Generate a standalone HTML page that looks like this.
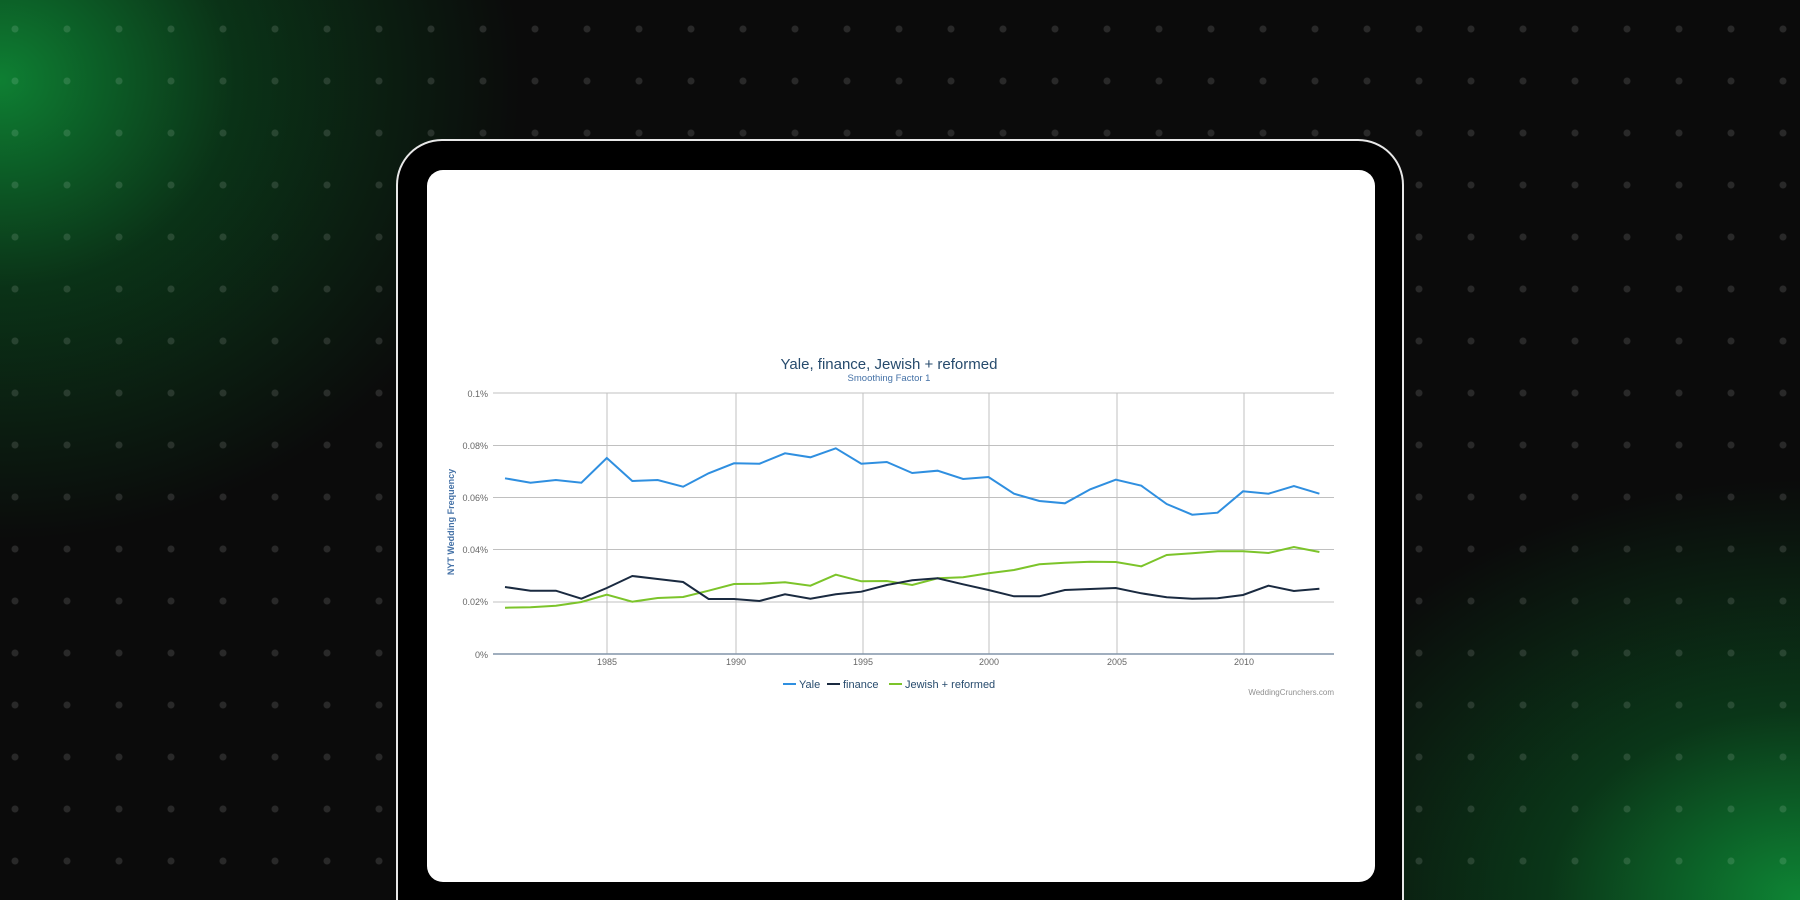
<!DOCTYPE html>
<html><head><meta charset="utf-8"><style>
html,body{margin:0;padding:0;overflow:hidden;width:1800px;height:900px}
body{background:#0b0b0b;font-family:"Liberation Sans",sans-serif}
#w{position:relative;width:1800px;height:900px;overflow:hidden;background:#0b0b0b}
.bg{position:absolute;inset:0;background:
radial-gradient(ellipse 520px 460px at 0px 80px,rgba(14,140,55,0.9),rgba(10,90,35,0.5) 45%,rgba(11,11,11,0) 100%),
radial-gradient(ellipse 560px 420px at 1800px 900px,rgba(14,140,55,0.95),rgba(10,90,35,0.55) 45%,rgba(11,11,11,0) 100%);}
.dots{position:absolute;inset:0;background-image:radial-gradient(circle,rgba(255,255,255,0.12) 3.2px,transparent 3.8px);background-size:52px 52px;background-position:-11px 3px}
.tab{position:absolute;left:396px;top:139px;width:1008px;height:761px;border-radius:46px 46px 0 0;background:#000;border:2px solid #e8e8e8;border-bottom:none;box-sizing:border-box}
.scr{position:absolute;left:427px;top:170px;width:948px;height:712px;background:#fff;border-radius:16px}
svg{position:absolute;left:0;top:0}
</style></head><body><div id="w">
<div class="bg"></div><div class="dots"></div>
<div class="tab"></div><div class="scr"></div>
<svg width="1800" height="900" id="c" font-family="Liberation Sans, sans-serif">
<g stroke="#c0c0c0" stroke-width="1">
<line x1="607" y1="393" x2="607" y2="654"/><line x1="736" y1="393" x2="736" y2="654"/><line x1="863" y1="393" x2="863" y2="654"/><line x1="989" y1="393" x2="989" y2="654"/><line x1="1117" y1="393" x2="1117" y2="654"/><line x1="1244" y1="393" x2="1244" y2="654"/>
<line x1="493" y1="393" x2="1334" y2="393"/><line x1="493" y1="445.5" x2="1334" y2="445.5"/><line x1="493" y1="497.5" x2="1334" y2="497.5"/><line x1="493" y1="549.5" x2="1334" y2="549.5"/><line x1="493" y1="602" x2="1334" y2="602"/>
</g>
<line x1="493" y1="654" x2="1334" y2="654" stroke="#8094a8" stroke-width="1.5"/>
<g font-size="9" fill="#666" text-anchor="end">
<text x="488" y="397">0.1%</text><text x="488" y="449">0.08%</text><text x="488" y="501">0.06%</text><text x="488" y="553">0.04%</text><text x="488" y="605">0.02%</text><text x="488" y="658">0%</text>
</g>
<g font-size="9" fill="#666" text-anchor="middle">
<text x="607" y="665">1985</text><text x="736" y="665">1990</text><text x="863" y="665">1995</text><text x="989" y="665">2000</text><text x="1117" y="665">2005</text><text x="1244" y="665">2010</text>
</g>
<text x="454" y="522" transform="rotate(-90 454 522)" text-anchor="middle" font-size="9" font-weight="bold" fill="#4572a7">NYT Wedding Frequency</text>
<text x="889" y="369" text-anchor="middle" font-size="15" fill="#274b6d">Yale, finance, Jewish + reformed</text>
<text x="889" y="381" text-anchor="middle" font-size="9.5" fill="#4572a7">Smoothing Factor 1</text>
<g font-size="11" fill="#274b6d">
<line x1="783" y1="684" x2="796" y2="684" stroke="#2f8fe0" stroke-width="2"/><text x="799" y="688">Yale</text>
<line x1="827" y1="684" x2="840" y2="684" stroke="#1a2a40" stroke-width="2"/><text x="843" y="688">finance</text>
<line x1="889" y1="684" x2="902" y2="684" stroke="#7cc42a" stroke-width="2"/><text x="905" y="688">Jewish + reformed</text>
</g>
<text x="1334" y="695" text-anchor="end" font-size="8" fill="#909090">WeddingCrunchers.com</text>
</svg>
</div>
<script>
var Y=[415,428,420,428,354,423,420,440,400,370,371,340,352,325,371,366,399,392,417,411,461,483,490,448,419,437,492,524,518,454,461,438,461];
var F=[741,752,752,776,744,708,717,726,777,777,783,763,776,763,755,735,721,715,733,750,769,769,750,747,744,760,772,776,775,765,737,753,746];
var G=[803,802,797,786,764,785,774,771,752,732,731,727,737,704,724,723,735,715,712,700,690,673,668,665,666,679,645,640,634,634,639,621,636];
function pl(a,c){var p=a.map(function(v,i){return (505+i*25.45).toFixed(1)+","+(340+v/3).toFixed(1)}).join(" ");
var e=document.createElementNS("http://www.w3.org/2000/svg","polyline");e.setAttribute("points",p);e.setAttribute("fill","none");e.setAttribute("stroke",c);e.setAttribute("stroke-width","2");document.getElementById("c").appendChild(e);}
pl(G,"#7cc42a");pl(F,"#1a2a40");pl(Y,"#2f8fe0");
</script>
</body></html>
